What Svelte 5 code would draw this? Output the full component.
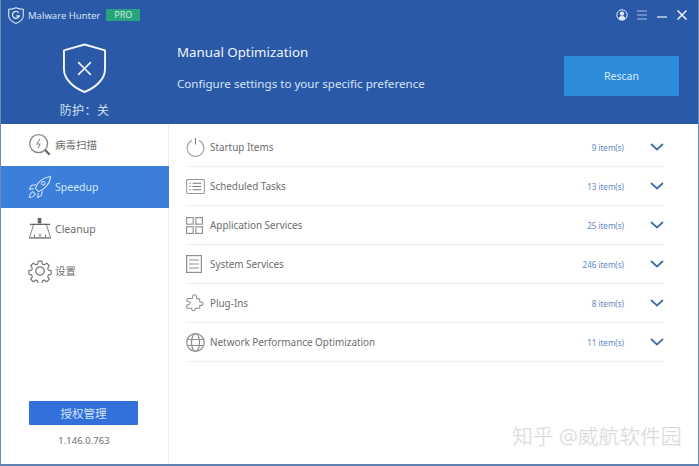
<script>
  const rows = [
    { name: 'Startup Items', count: '9 item(s)', icon: 'power' },
    { name: 'Scheduled Tasks', count: '13 item(s)', icon: 'tasks' },
    { name: 'Application Services', count: '25 item(s)', icon: 'apps' },
    { name: 'System Services', count: '246 item(s)', icon: 'system' },
    { name: 'Plug-Ins', count: '8 item(s)', icon: 'plug' },
    { name: 'Network Performance Optimization', count: '11 item(s)', icon: 'globe' }
  ];
</script>

<div class="window">
  <header class="header">
    <div class="titlebar">
      <svg class="logo" viewBox="0 0 16 17" width="16" height="17">
        <path d="M8 .8C10.500 2 12.500 2.300 15.300 2.300v6.500c0 3.600-3.700 6.300-7.300 7.600-3.600-1.300-7.300-4-7.300-7.600V2.300C3.500 2.300 5.500 2 8 .8z" fill="none" stroke="#d5e2f4" stroke-width="1.100"/>
        <path d="M10.800 5.800A3.500 3.500 0 1 0 11.300 9H8.200" fill="none" stroke="#d5e2f4" stroke-width="1.300"/>
      </svg>
      <span class="brand">Malware Hunter</span>
      <span class="pro">PRO</span>
      <div class="controls">
        <svg viewBox="0 0 12 12" width="12" height="12">
          <circle cx="6" cy="6" r="5.200" fill="none" stroke="#dfe8f5" stroke-width="1"/>
          <circle cx="6" cy="4.600" r="2.200" fill="#dfe8f5"/>
          <path d="M2.400 9.600c.8-2 2.200-2.600 3.600-2.600s2.800.6 3.600 2.600a5 5 0 0 1-7.200 0z" fill="#dfe8f5"/>
        </svg>
        <svg viewBox="0 0 12 12" width="12" height="12">
          <path d="M1 2h10M1 6h10M1 10h10" stroke="#a9bfe0" stroke-width="1" fill="none"/>
        </svg>
        <svg viewBox="0 0 12 12" width="12" height="12">
          <path d="M1 8h10" stroke="#dfe8f5" stroke-width="1.300" fill="none"/>
        </svg>
        <svg viewBox="0 0 12 12" width="12" height="12">
          <path d="M1.500 1.500l9 9M10.500 1.500l-9 9" stroke="#f2f6fc" stroke-width="1.500" fill="none"/>
        </svg>
      </div>
    </div>
    <div class="hero">
      <div class="status">
        <svg viewBox="0 0 46 52" width="45" height="51">
          <path d="M23 1.500 44 7.500v19c0 11-10.500 19.500-21 23.500C12.500 46 2 37.500 2 26.500v-19z" fill="none" stroke="#f2f6fc" stroke-width="2" stroke-linejoin="round"/>
          <path d="M16.500 19.500l13 13M29.500 19.500l-13 13" stroke="#f2f6fc" stroke-width="1.600" fill="none"/>
        </svg>
        <span>防护：关</span>
      </div>
      <div class="intro">
        <h1>Manual Optimization</h1>
        <p>Configure settings to your specific preference</p>
      </div>
      <button class="rescan">Rescan</button>
    </div>
  </header>

  <div class="body">
    <aside class="sidebar">
      <nav>
        <div class="nav-item">
          <svg viewBox="0 0 26 26" width="26" height="26">
            <circle cx="11.500" cy="11.500" r="9.700" fill="none" stroke="#858585" stroke-width="1.400"/>
            <path d="M18.500 18.500l5 5" stroke="#666" stroke-width="2.400" fill="none"/>
            <path d="M13 6.500l-3.500 5.500h3.500l-2 4.500" stroke="#8a8a8a" stroke-width="1.100" fill="none"/>
          </svg>
          <span>病毒扫描</span>
        </div>
        <div class="nav-item active">
          <svg viewBox="0 0 26 26" width="26" height="26" fill="none" stroke="#d5e6fa" stroke-width="1.100" stroke-linejoin="round">
            <path d="M8 14.500C10 8 16 2.500 24.500 1.500 24 9.500 18 15.500 11.500 18z"/>
            <circle cx="16.500" cy="9" r="2"/>
            <path d="M8.500 10.500 3.500 11.500 1.500 15.500 6.500 15M15.500 17.500 14.500 22 10.500 24.500 11 19.500"/>
            <path d="M5 18c-2 1-3 3-3.500 6.500C5 24 7 23 8 21z"/>
          </svg>
          <span>Speedup</span>
        </div>
        <div class="nav-item">
          <svg viewBox="0 0 26 24" width="26" height="24">
            <rect x="10.500" y="0" width="4" height="6" fill="#666"/>
            <path d="M2 7h22" stroke="#666" stroke-width="1.400"/>
            <path d="M6 7.500 1.500 21.500h23L20 7.500" fill="none" stroke="#8a8a8a" stroke-width="1.100"/>
            <path d="M1 21.700h24" stroke="#8a8a8a" stroke-width="1.500"/>
            <path d="M7 21v-3M13 21v-4M19 21v-3" stroke="#777" stroke-width="1.200"/>
          </svg>
          <span>Cleanup</span>
        </div>
        <div class="nav-item">
          <svg viewBox="0 0 24 24" width="24" height="24" fill="none" stroke="#777" stroke-width="1.300" stroke-linejoin="round">
            <circle cx="12" cy="12" r="4.200"/>
            <path d="M10 1.200h4l.7 3.200 1.900.8 2.800-1.800 2.800 2.800-1.800 2.800.8 1.900 3 .7v4l-3 .7-.8 1.900 1.800 2.800-2.800 2.800-2.800-1.800-1.900.8-.7 3h-4l-.7-3-1.900-.8-2.800 1.800-2.800-2.800 1.800-2.800-.8-1.900-3-.7v-4l3-.7.8-1.900-1.800-2.800 2.800-2.800 2.800 1.800 1.900-.8z" transform="translate(1.100 1.100) scale(.91)"/>
          </svg>
          <span>设置</span>
        </div>
      </nav>
      <div class="license">
        <button class="auth">授权管理</button>
        <div class="version">1.146.0.763</div>
      </div>
    </aside>

    <main class="content">
      {#each rows as row}
        <div class="row">
          <span class="row-icon">
            {#if row.icon === 'power'}
              <svg viewBox="0 0 20 20" width="19" height="20" fill="none" stroke="#999" stroke-width="1.100">
                <path d="M6.200 3.200a8.800 8.800 0 1 0 7.600 0"/>
                <path d="M10 .5v7" stroke="#777"/>
              </svg>
            {:else if row.icon === 'tasks'}
              <svg viewBox="0 0 20 16" width="19" height="15" fill="none" stroke="#999" stroke-width="1.100">
                <rect x=".6" y=".6" width="18.800" height="14.800" rx="1"/>
                <path d="M3.500 4.500h1.500M3.500 8h1.500M3.500 11.500h1.500M7 4.500h9M7 8h9M7 11.500h9" stroke="#777"/>
              </svg>
            {:else if row.icon === 'apps'}
              <svg viewBox="0 0 18 18" width="17" height="17" fill="none" stroke="#8f8f8f" stroke-width="1.200">
                <rect x=".6" y=".6" width="7" height="7"/>
                <rect x="10.400" y=".6" width="7" height="7"/>
                <rect x=".6" y="10.400" width="7" height="7"/>
                <rect x="10.400" y="10.400" width="7" height="7"/>
              </svg>
            {:else if row.icon === 'system'}
              <svg viewBox="0 0 16 18" width="16" height="18" fill="none" stroke="#8f8f8f" stroke-width="1.200">
                <rect x=".6" y=".6" width="14.800" height="16.800"/>
                <path d="M3 5h10M3 9h10M3 13h10"/>
              </svg>
            {:else if row.icon === 'plug'}
              <svg viewBox="0 0 19 19" width="18" height="18" fill="none" stroke="#8f8f8f" stroke-width="1.100" stroke-linejoin="round">
                <path d="M7 4.500V3a2 2 0 0 1 4-.5l.2 2.500h3.300v3.500h1.800a1.700 1.700 0 0 1 0 3.500h-1.800v3h-5l.2 1.500c-.5 1.300-3 1.500-3.700 0l.2-1.500H.8v-3.500l2.200-.3c1.800-.5 1.800-2.700 0-3L1 8V5z"/>
              </svg>
            {:else}
              <svg viewBox="0 0 19 19" width="19" height="19" fill="none" stroke="#8f8f8f" stroke-width="1.200">
                <circle cx="9.500" cy="9.500" r="8.800"/>
                <ellipse cx="9.500" cy="9.500" rx="4" ry="8.800"/>
                <path d="M1.500 6.500h16M1.500 12.500h16"/>
              </svg>
            {/if}
          </span>
          <span class="row-name">{row.name}</span>
          <span class="row-count">{row.count}</span>
          <svg class="chev" viewBox="0 0 14 8" width="14" height="8">
            <path d="M1 1l6 5.500L13 1" fill="none" stroke="#3f6ca8" stroke-width="1.700"/>
          </svg>
        </div>
      {/each}
    </main>
  </div>
  <div class="watermark">知乎 @威航软件园</div>
</div>

<style>
  :global(body) {
    margin: 0;
    background: #fff;
  }
  .window {
    position: relative;
    width: 699px;
    height: 466px;
    box-sizing: border-box;
    display: flex;
    flex-direction: column;
    overflow: hidden;
    border-left: 1px solid #6a8cb8;
    border-right: 1px solid #6a8cb8;
    border-bottom: 2px solid #5f83b0;
    font-family: "Noto Sans", "Noto Sans CJK SC", sans-serif;
    color: #666;
  }
  .header {
    height: 124px;
    flex: none;
    background: #2a59a8;
    color: #e8f0fa;
    margin: 0 -1px;
  }
  .titlebar {
    display: flex;
    align-items: center;
    height: 30px;
    padding: 0 11px 0 8px;
  }
  .brand {
    margin-left: 4px;
    font-size: 9.500px;
    color: #d5e2f4;
  }
  .pro {
    margin-left: 6px;
    width: 34px;
    height: 12px;
    background: #27a37d;
    color: #cdebd9;
    font-size: 9px;
    line-height: 12px;
    text-align: center;
  }
  .controls {
    margin-left: auto;
    display: flex;
    gap: 8px;
    align-items: center;
  }
  .hero {
    display: flex;
    height: 94px;
  }
  .status {
    width: 169px;
    flex: none;
    display: flex;
    flex-direction: column;
    align-items: center;
    padding-top: 13px;
    box-sizing: border-box;
    gap: 9px;
  }
  .status span {
    font-size: 12px;
    line-height: 16px;
    letter-spacing: .4px;
    color: #d5e2f4;
  }
  .intro {
    margin-left: 8px;
    padding-top: 12px;
  }
  h1 {
    margin: 0;
    font-size: 13.300px;
    line-height: 20px;
    font-weight: 400;
    color: #eef4fc;
  }
  p {
    margin: 13px 0 0;
    font-size: 11.600px;
    line-height: 18px;
    color: #d5e4f6;
  }
  .rescan {
    margin: 26px 20px 0 auto;
    width: 115px;
    height: 40px;
    border: 0;
    padding: 0;
    background: #2d8bdc;
    color: #d4ecfb;
    font: inherit;
    font-size: 10.500px;
  }
  .body {
    flex: 1;
    display: flex;
    min-height: 0;
  }
  .sidebar {
    width: 167px;
    flex: none;
    display: flex;
    flex-direction: column;
    border-right: 1px solid #ececec;
    background: #fff;
  }
  nav {
    flex: 1;
  }
  .nav-item {
    height: 42px;
    display: flex;
    align-items: center;
    padding-left: 27px;
    gap: 3px;
    font-size: 10.500px;
    color: #6c6c6c;
    line-height: 16px;
  }
  .nav-item svg {
    flex: none;
    width: 24px;
  }
  .nav-item.active {
    background: #3b7fdb;
    color: #d6e8fb;
    margin-right: -1px;
  }
  .license {
    display: flex;
    flex-direction: column;
    align-items: center;
    padding-bottom: 12px;
  }
  .auth {
    width: 109px;
    height: 24px;
    border: 0;
    padding: 0;
    border-radius: 1px;
    background: #3270dc;
    color: #d5e3f8;
    font: inherit;
    font-size: 11.500px;
    margin-left: -2px;
  }
  .version {
    margin-top: 9px;
    margin-left: -1px;
    height: 18px;
    font-size: 9.400px;
    line-height: 14px;
    color: #707070;
    letter-spacing: .1px;
  }
  .content {
    flex: 1;
    padding: 4px 34px 0 17px;
  }
  .row {
    height: 38px;
    display: flex;
    align-items: center;
    border-bottom: 1px solid #eeeeee;
  }
  .row-icon {
    width: 24px;
    flex: none;
    display: flex;
    justify-content: flex-start;
  }
  .row-name {
    font-size: 9.900px;
    color: #6c6c6c;
  }
  .row-count {
    margin-left: auto;
    font-size: 8px;
    color: #5f87c4;
  }
  .chev {
    margin: 0 0 0 26px;
    flex: none;
  }
  .watermark {
    position: absolute;
    left: 511px;
    top: 423px;
    font-size: 20.800px;
    line-height: 26px;
    white-space: nowrap;
    color: #d9d9d9;
    font-weight: 300;
    text-shadow: 1px 1px 0 #f6f6f6;
  }
</style>
